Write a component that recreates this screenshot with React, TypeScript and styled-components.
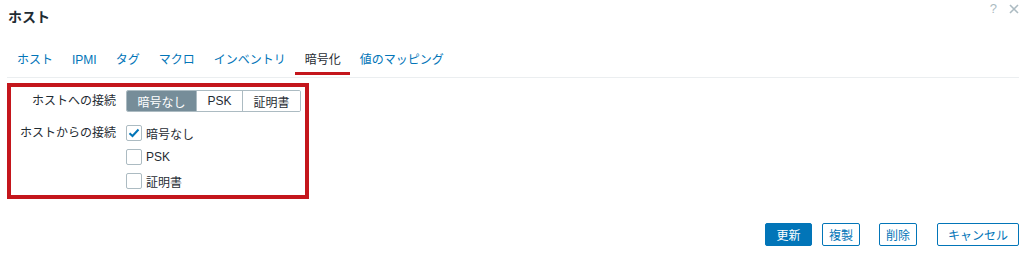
import React from "react";
import styled, { createGlobalStyle } from "styled-components";

const Global = createGlobalStyle`
  html, body { margin: 0; padding: 0; background: #ffffff; }
  body {
    font-family: "Liberation Sans", Arial, "Noto Sans CJK JP", sans-serif;
    font-size: 12px;
    color: #1f2c33;
  }
  * { box-sizing: border-box; }
`;

const Dialog = styled.div`
  width: 1024px;
  height: 254px;
  display: flex;
  flex-direction: column;
  padding: 0 5px 0 7px;
`;

const Header = styled.div`
  height: 36px;
  display: flex;
  align-items: flex-start;
  justify-content: space-between;
`;

const Title = styled.h4`
  margin: 0;
  padding-left: 1px;
  line-height: 35px;
  font-size: 14px;
  font-weight: bold;
  color: #1f2c33;
`;

const HeaderActions = styled.div`
  display: flex;
  align-items: center;
  gap: 12px;
  padding-top: 3px;
  color: #acbbc2;
`;

const HelpMark = styled.span`
  font-size: 13px;
  line-height: 12px;
  color: #acbbc2;
`;

const TabBar = styled.ul`
  list-style: none;
  margin: 12px 0 0;
  padding: 0 0 2px;
  display: flex;
  border-bottom: 1px solid #ebeef0;
`;

const Tab = styled.li<{ $active?: boolean }>`
  padding: 0 9px 0 10px;
  line-height: 24px;
  border-bottom: 3px solid ${(p) => (p.$active ? "#c4161c" : "transparent")};
  color: ${(p) => (p.$active ? "#1f2c33" : "#0275b8")};
  cursor: pointer;
`;

const Highlight = styled.div`
  margin-top: 5px;
  width: 302px;
  height: 116px;
  border: 4px solid #c4161c;
  padding-top: 3px;
  display: flex;
  flex-direction: column;
  gap: 13px;
`;

const FormRow = styled.div<{ $center?: boolean }>`
  display: grid;
  grid-template-columns: 105px auto;
  column-gap: 10px;
  align-items: ${(p) => (p.$center ? "center" : "start")};
`;

const Label = styled.label`
  text-align: right;
  white-space: nowrap;
  color: #1f2c33;
  line-height: 16px;
`;

const Segmented = styled.div`
  display: flex;
  border: 1px solid #acbbc2;
  border-radius: 2px;
  width: max-content;
  overflow: hidden;
`;

const Segment = styled.button<{ $active?: boolean }>`
  font: inherit;
  height: 20px;
  padding: 0 10.5px;
  border: none;
  border-left: 1px solid #acbbc2;
  background: ${(p) => (p.$active ? "#768d99" : "#ffffff")};
  color: ${(p) => (p.$active ? "#ffffff" : "#1f2c33")};
  &:first-child { border-left: none; }
`;

const CheckList = styled.ul`
  list-style: none;
  margin: 0;
  padding: 0;
  display: flex;
  flex-direction: column;
  gap: 8px;
`;

const CheckItem = styled.li`
  display: flex;
  align-items: center;
  gap: 4px;
  height: 16px;
`;

const Box = styled.span`
  width: 16px;
  height: 16px;
  border: 1px solid #acbbc2;
  border-radius: 2px;
  background: #ffffff;
  display: flex;
  align-items: center;
  justify-content: center;
`;

const Footer = styled.div`
  margin-top: 24px;
  display: flex;
  justify-content: flex-end;
`;

const Button = styled.button<{ $primary?: boolean; $w: number; $gap: number }>`
  font: inherit;
  height: 23px;
  width: ${(p) => p.$w}px;
  margin-left: ${(p) => p.$gap}px;
  padding: 0;
  border-radius: 2px;
  border: 1px solid #0275b8;
  background: ${(p) => (p.$primary ? "#0275b8" : "#ffffff")};
  color: ${(p) => (p.$primary ? "#ffffff" : "#0275b8")};
`;

const Check = () => (
  <svg width="12" height="10" viewBox="0 0 12 10">
    <path d="M1.5 5.2 L4.5 8 L10.5 1.5" fill="none" stroke="#0275b8" strokeWidth="2" />
  </svg>
);

const CloseIcon = () => (
  <svg width="10" height="10" viewBox="0 0 10 10">
    <path d="M1 1 L9 9 M9 1 L1 9" stroke="#acbbc2" strokeWidth="1.6" />
  </svg>
);

const tabs = ["ホスト", "IPMI", "タグ", "マクロ", "インベントリ", "暗号化", "値のマッピング"];

export default function App() {
  return (
    <>
      <Global />
      <Dialog>
        <Header>
          <Title>ホスト</Title>
          <HeaderActions>
            <HelpMark>?</HelpMark>
            <CloseIcon />
          </HeaderActions>
        </Header>
        <TabBar>
          {tabs.map((t) => (
            <Tab key={t} $active={t === "暗号化"}>
              {t}
            </Tab>
          ))}
        </TabBar>
        <Highlight>
          <FormRow $center>
            <Label>ホストへの接続</Label>
            <Segmented>
              <Segment $active>暗号なし</Segment>
              <Segment>PSK</Segment>
              <Segment>証明書</Segment>
            </Segmented>
          </FormRow>
          <FormRow>
            <Label>ホストからの接続</Label>
            <CheckList>
              <CheckItem>
                <Box>
                  <Check />
                </Box>
                暗号なし
              </CheckItem>
              <CheckItem>
                <Box />
                PSK
              </CheckItem>
              <CheckItem>
                <Box />
                証明書
              </CheckItem>
            </CheckList>
          </FormRow>
        </Highlight>
        <Footer>
          <Button $primary $w={47} $gap={0}>更新</Button>
          <Button $w={38} $gap={10}>複製</Button>
          <Button $w={38} $gap={19}>削除</Button>
          <Button $w={82} $gap={20}>キャンセル</Button>
        </Footer>
      </Dialog>
    </>
  );
}
